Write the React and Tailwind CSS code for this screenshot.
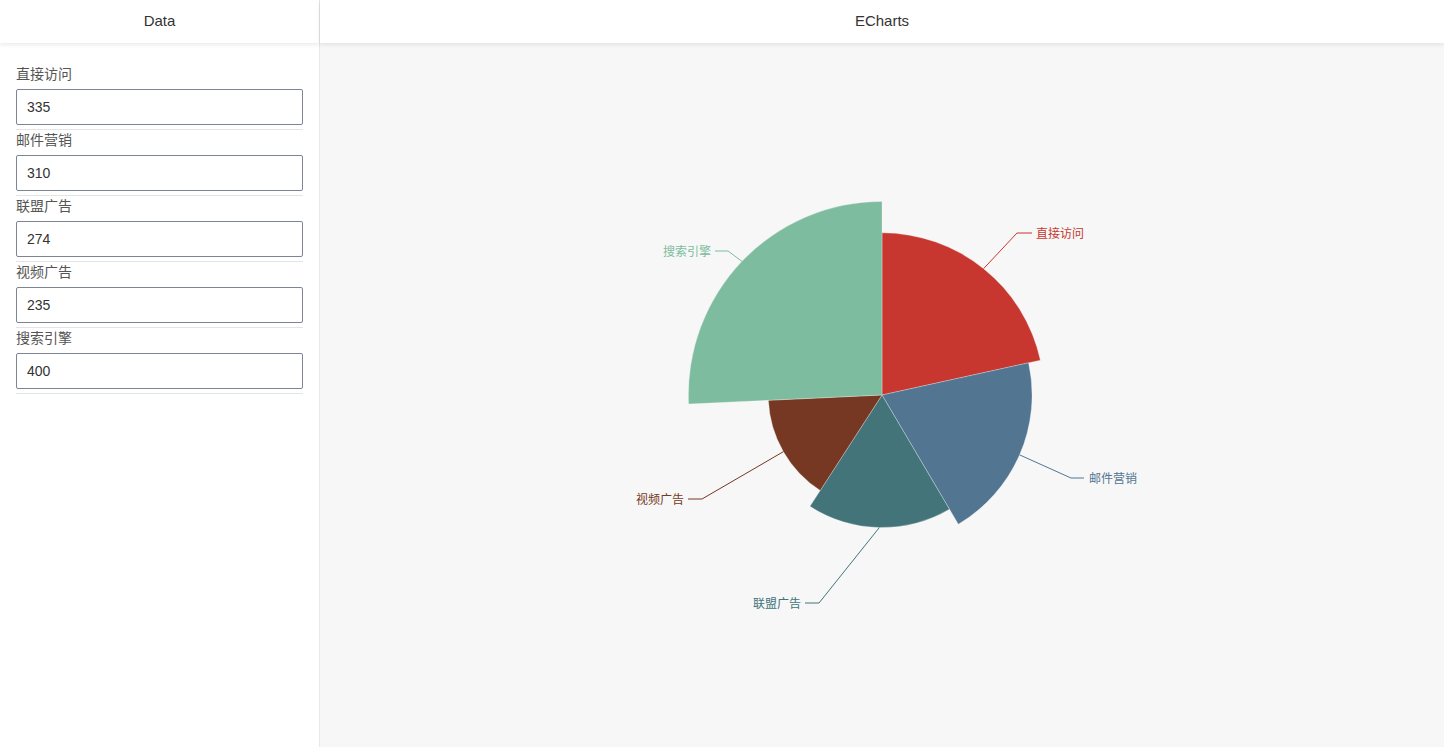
import { useState } from 'react';

const FONT = { fontFamily: '"Liberation Sans", "Noto Sans CJK SC", sans-serif' };

const SERIES = [
  { name: '直接访问', color: '#c8372f', line: [[1017, 233], [1032, 233]], text: [1036, 233], anchor: 'start' },
  { name: '邮件营销', color: '#527692', line: [[1071, 478], [1084, 478]], text: [1089, 478], anchor: 'start' },
  { name: '联盟广告', color: '#42747a', line: [[819, 603], [805, 603]], text: [801, 603], anchor: 'end' },
  { name: '视频广告', color: '#763822', line: [[702, 499], [688, 499]], text: [684, 499], anchor: 'end' },
  { name: '搜索引擎', color: '#7dbc9f', line: [[728, 251], [715, 251]], text: [711, 251], anchor: 'end' },
];

// chart area origin in page coords
const OX = 320, OY = 43;
const CX = 562, CY = 352, R = 193.6;

function pt(a, r) {
  return [CX + r * Math.sin(a), CY - r * Math.cos(a)];
}

function RosePie({ values }) {
  const total = values.reduce((s, v) => s + v, 0) || 1;
  const max = Math.max(...values, 1);
  let a0 = 0;
  return (
    <svg className="w-full h-full" viewBox="0 0 1124 704">
      {SERIES.map((s, i) => {
        const v = values[i];
        const sweep = (v / total) * Math.PI * 2;
        const a1 = a0 + sweep;
        const r = (v / max) * R;
        const [x0, y0] = pt(a0, r);
        const [x1, y1] = pt(a1, r);
        const mid = (a0 + a1) / 2;
        const [lx, ly] = pt(mid, r);
        a0 = a1;
        const large = sweep > Math.PI ? 1 : 0;
        const [b, e] = s.line;
        return (
          <g key={s.name}>
            <path
              d={`M${CX} ${CY} L${x0} ${y0} A${r} ${r} 0 ${large} 1 ${x1} ${y1} Z`}
              fill={s.color}
              stroke="#f7f7f7"
              strokeWidth="0.3"
            />
            <polyline
              points={`${lx},${ly} ${b[0] - OX},${b[1] - OY} ${e[0] - OX},${e[1] - OY}`}
              fill="none"
              stroke={s.color}
              strokeWidth="1"
            />
            <text
              x={s.text[0] - OX}
              y={s.text[1] - OY + 1.5}
              fill={s.color}
              fontSize="12"
              textAnchor={s.anchor}
              dominantBaseline="middle"
              style={FONT}
            >
              {s.name}
            </text>
          </g>
        );
      })}
    </svg>
  );
}

export default function App() {
  const [values, setValues] = useState([335, 310, 274, 235, 400]);

  const update = (i, v) => {
    const next = [...values];
    next[i] = Number(v) || 0;
    setValues(next);
  };

  return (
    <div className="flex h-[747px] w-full overflow-hidden bg-white" style={FONT}>
      <div className="w-[320px] shrink-0 flex flex-col border-r border-[#e8e8e8]">
        <div className="relative z-10 h-[43px] shrink-0 flex items-center justify-center bg-white text-[15px] text-[#333] shadow-[0_2px_4px_rgba(0,0,0,0.08)]">
          Data
        </div>
        <div className="flex-1 px-4 pt-[21px]">
          {SERIES.map((s, i) => (
            <div key={s.name} className="border-b border-[#e4e4e4] pb-1">
              <div className="h-5 leading-5 text-[14px] text-[#555]">{s.name}</div>
              <input
                value={values[i]}
                onChange={e => update(i, e.target.value)}
                className="mt-[5px] block w-full h-9 px-[10px] border border-[#7d8594] rounded-[2px] text-[14px] text-[#333] bg-white outline-none"
              />
            </div>
          ))}
        </div>
      </div>
      <div className="flex-1 flex flex-col bg-[#f7f7f7]">
        <div className="relative z-10 h-[43px] shrink-0 flex items-center justify-center bg-white text-[15px] text-[#333] shadow-[0_2px_4px_rgba(0,0,0,0.08)]">
          ECharts
        </div>
        <div className="flex-1">
          <RosePie values={values} />
        </div>
      </div>
    </div>
  );
}
